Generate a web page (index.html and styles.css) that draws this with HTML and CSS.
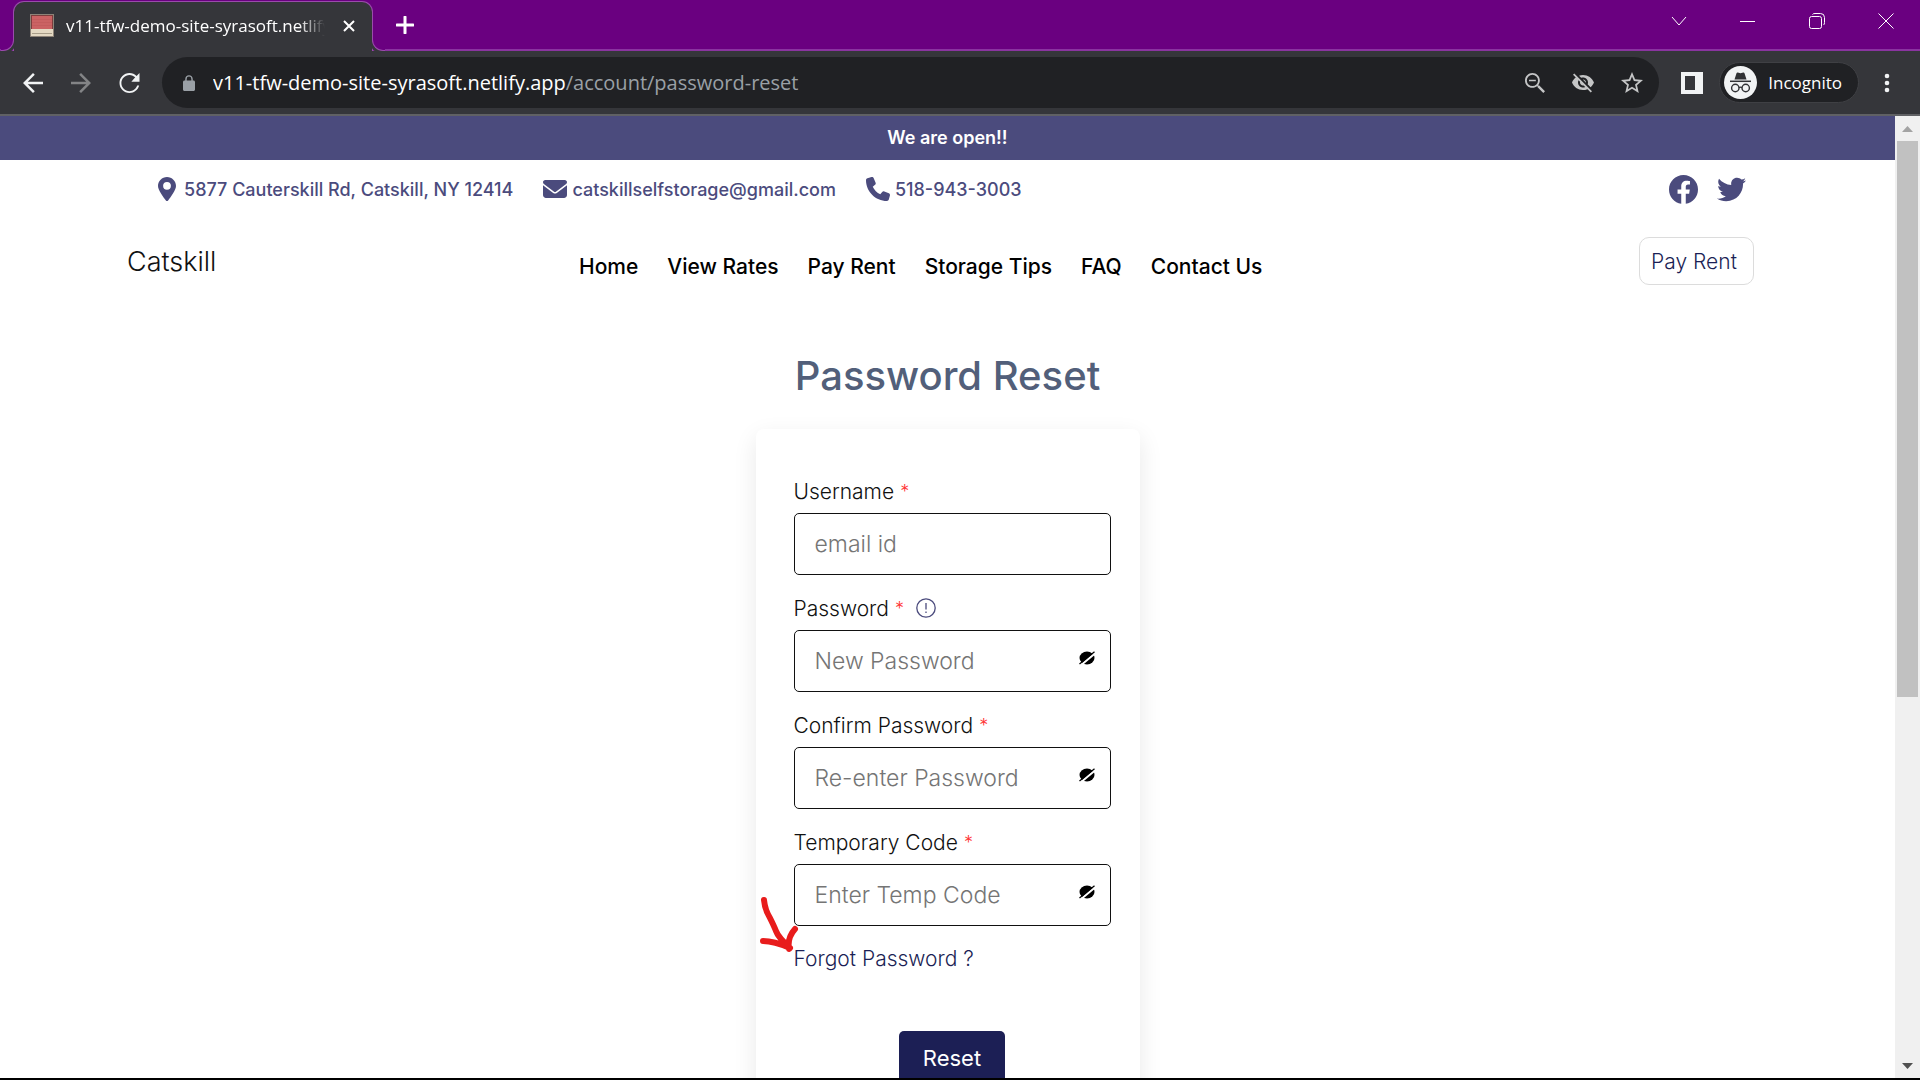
FILE: index.html
```html
<!DOCTYPE html>
<html lang="en">
<head>
<meta charset="utf-8">
<meta name="viewport" content="width=device-width, initial-scale=1">
<title>Password Reset</title>
<link rel="stylesheet" href="styles.css">
</head>
<body>
<div class="window">
  <div class="tabstrip">
    <div class="tab">
      <svg class="tab-favicon" viewBox="0 0 24 23" aria-hidden="true"><rect width="24" height="23" fill="#8d8378"/><rect x="1" y="1" width="22" height="21" fill="#e4d9c3"/><rect x="1" y="1" width="22" height="14" fill="#7d3d3d"/><rect x="2" y="2" width="20" height="13" fill="#cb6263"/><path d="M2 5.500h20M2 8.500h20M2 11.500h20" stroke="#c45c5d"/><path d="M2 19.500h20" stroke="#a89d89"/></svg>
      <span class="tab-title">v11-tfw-demo-site-syrasoft.netlify.app</span>
      <button class="tab-close" aria-label="Close tab"><svg width="12" height="12" viewBox="0 0 12 12"><path d="M1 1l10 10M11 1L1 11" stroke="#fff" stroke-width="2"/></svg></button>
    </div>
    <button class="new-tab" aria-label="New tab"><svg width="18" height="18" viewBox="0 0 18 18"><path d="M9 1v16M1 9h16" stroke="#fff" stroke-width="3" stroke-linecap="round"/></svg></button>
    <div class="window-controls">
      <button aria-label="Search tabs"><svg width="16" height="16" viewBox="0 0 16 16"><path d="M1 4l7 8 7-8"/></svg></button>
      <button aria-label="Minimize"><svg width="16" height="16" viewBox="0 0 16 16"><path d="M0 8.500h15"/></svg></button>
      <button aria-label="Restore"><svg width="16" height="16" viewBox="0 0 16 16"><rect x=".5" y="3.500" width="12" height="12" rx="2"/><path d="M3.500 1.500Q4 .5 6 .5h5.500q4 0 4 4v5q0 2-1 2.500"/></svg></button>
      <button aria-label="Close"><svg width="16" height="16" viewBox="0 0 16 16"><path d="M.5.5l15 15M15.500.5l-15 15"/></svg></button>
    </div>
  </div>

  <div class="toolbar">
    <div class="nav-buttons">
      <button aria-label="Back"><svg width="20" height="20" viewBox="4 4 16 16"><path fill="#f1f3f4" d="M20 11H7.830l5.590-5.590L12 4l-8 8 8 8 1.410-1.410L7.830 13H20v-2z"/></svg></button>
      <button aria-label="Forward"><svg width="20" height="20" viewBox="4 4 16 16"><path fill="#838486" d="M4 11h12.170l-5.590-5.590L12 4l8 8-8 8-1.410-1.410L16.170 13H4v-2z"/></svg></button>
      <button aria-label="Reload"><svg width="21" height="20" viewBox="4 4 16 16"><path fill="#f1f3f4" d="M17.650 6.350C16.200 4.900 14.210 4 12 4c-4.420 0-7.990 3.580-7.990 8s3.570 8 7.990 8c3.730 0 6.840-2.550 7.730-6h-1.600c-.9 2.600-3.200 4.500-6.130 4.500-3.600 0-6.500-2.900-6.500-6.500s2.900-6.500 6.500-6.500c1.800 0 3.400.75 4.570 1.930L13.500 11H20V4l-2.350 2.350z"/></svg></button>
    </div>
    <div class="omnibox">
      <svg class="lock" width="12" height="16" viewBox="4 1 16 21" aria-hidden="true"><path fill="#9aa0a6" fill-rule="evenodd" d="M18 8h-1V6c0-2.760-2.240-5-5-5S7 3.240 7 6v2H6c-1.100 0-2 .9-2 2v10c0 1.100.9 2 2 2h12c1.100 0 2-.9 2-2V10c0-1.100-.9-2-2-2zM15.100 8H8.900V6a3.100 3.100 0 016.200 0z"/></svg>
      <div class="url"><span class="url-host">v11-tfw-demo-site-syrasoft.netlify.app</span>/account/password-reset</div>
      <button aria-label="Zoom"><svg width="20" height="20" viewBox="3 3 17.500 17.500"><path fill="#c4c5c6" d="M15.500 14h-.79l-.28-.27C15.410 12.590 16 11.110 16 9.500 16 5.910 13.090 3 9.500 3S3 5.910 3 9.500 5.910 16 9.500 16c1.610 0 3.090-.59 4.230-1.570l.27.28v.79l5 4.990L20.490 19l-4.990-5zm-6 .4a4.900 4.900 0 110-9.800 4.900 4.900 0 010 9.800zM6.500 8.800h6v1.400h-6z"/></svg></button>
      <button aria-label="Cookies blocked"><svg width="22" height="20" viewBox="1 2.500 22 20"><path fill="#c4c5c6" d="M12 7c2.760 0 5 2.240 5 5 0 .65-.13 1.260-.36 1.830l2.920 2.920c1.510-1.260 2.700-2.890 3.430-4.750-1.730-4.390-6-7.500-11-7.500-1.400 0-2.740.25-3.980.7l2.160 2.160C10.740 7.130 11.350 7 12 7zM2 4.270l2.280 2.280.46.46C3.080 8.300 1.780 10.020 1 12c1.730 4.390 6 7.500 11 7.500 1.550 0 3.030-.3 4.380-.84l.42.42L19.730 22 21 20.730 3.270 3 2 4.270zM7.530 9.800l1.550 1.550c-.05.21-.08.43-.08.65 0 1.660 1.340 3 3 3 .22 0 .44-.03.65-.08l1.550 1.550c-.67.33-1.410.53-2.200.53-2.760 0-5-2.240-5-5 0-.79.2-1.530.53-2.200zm4.310-.78l3.150 3.150.02-.16c0-1.660-1.340-3-3-3l-.17.01z"/></svg></button>
      <button aria-label="Bookmark this tab"><svg width="22" height="21" viewBox="2 2 20 19"><path fill="#c4c5c6" d="M22 9.240l-7.190-.62L12 2 9.190 8.630 2 9.240l5.460 4.730L5.820 21 12 17.270 18.180 21l-1.630-7.030L22 9.240zM12 15.400l-3.760 2.270 1-4.280-3.320-2.880 4.380-.38L12 6.100l1.710 4.040 4.380.38-3.320 2.880 1 4.280L12 15.400z"/></svg></button>
    </div>
    <button class="side-panel" aria-label="Side panel"><svg width="22" height="22" viewBox="0 0 22 22"><path fill="#f1f3f4" fill-rule="evenodd" d="M0 0h22v22H0zM4 4v14h10V4z"/></svg></button>
    <button class="profile">
      <svg width="33" height="33" viewBox="0 0 33 33" aria-hidden="true"><circle cx="16.500" cy="16.500" r="16.500" fill="#f1f3f4"/><path fill="#303134" d="M10.500 13.500l2-6.300q.4-.9 1.300-.7l2.700.7 2.700-.7q.9-.2 1.300.7l2 6.300z"/><path stroke="#303134" stroke-width="1.500" d="M6 15.300h21"/><g fill="none" stroke="#303134" stroke-width="1.400"><circle cx="11.300" cy="22" r="3.700"/><circle cx="21.700" cy="22" r="3.700"/><path d="M15 21.600q1.500-1 3 0"/></g></svg>
      <span>Incognito</span>
    </button>
    <button class="menu" aria-label="Menu"><svg width="6" height="20" viewBox="0 0 6 20"><g fill="#f1f3f4"><circle cx="3" cy="3" r="2.300"/><circle cx="3" cy="10" r="2.300"/><circle cx="3" cy="17" r="2.300"/></g></svg></button>
  </div>

  <div class="viewport">
    <div class="page">
      <div class="banner">We are open!!</div>

      <div class="contact">
        <span class="contact-item contact-address"><svg width="18" height="24" viewBox="0 0 384 512" aria-hidden="true"><path d="M215.700 499.200C267 435 384 279.400 384 192C384 86 298 0 192 0S0 86 0 192c0 87.400 117 243 168.300 307.200c12.300 15.300 35.100 15.300 47.400 0zM192 105a83 83 0 1 1 0 166 83 83 0 1 1 0-166z"/></svg>5877 Cauterskill Rd, Catskill, NY 12414</span>
        <a class="contact-item" href="mailto:catskillselfstorage@gmail.com"><svg width="24" height="24" viewBox="0 0 512 512" aria-hidden="true"><path d="M48 64C21.500 64 0 85.500 0 112c0 15.100 7.100 29.300 19.200 38.400L236.800 313.600c11.400 8.500 27 8.500 38.400 0L492.800 150.400c12.100-9.100 19.200-23.300 19.200-38.400c0-26.500-21.500-48-48-48H48zM0 176V384c0 35.300 28.700 64 64 64H448c35.300 0 64-28.700 64-64V176L294.400 339.200c-22.800 17.100-54 17.100-76.800 0L0 176z"/></svg>catskillselfstorage@gmail.com</a>
        <a class="contact-item" href="tel:518-943-3003"><svg width="24" height="24" viewBox="0 0 512 512" aria-hidden="true"><path d="M164.900 24.600c-7.700-18.600-28-28.500-47.400-23.200l-88 24C12.100 30.200 0 46 0 64C0 311.400 200.600 512 448 512c18 0 33.800-12.100 38.600-29.500l24-88c5.300-19.400-4.600-39.700-23.200-47.400l-96-40c-16.300-6.800-35.200-2.100-46.300 11.600L304.700 368C234.300 334.700 177.300 277.700 144 207.300L193.300 167c13.700-11.200 18.400-30 11.600-46.300l-40-96z"/></svg>518-943-3003</a>
        <div class="social">
          <a href="#facebook" aria-label="Facebook"><svg width="29" height="29" viewBox="8 8 496 496"><path d="M504 256C504 119 393 8 256 8S8 119 8 256c0 123.780 90.690 226.380 209.250 245V327.690h-63V256h63v-54.640c0-62.150 37-96.480 93.670-96.480 27.140 0 55.520 4.840 55.520 4.840v61h-31.280c-30.800 0-40.410 19.120-40.410 38.730V256h68.780l-11 71.690h-57.780V501C413.310 482.380 504 379.780 504 256z"/></svg></a>
          <a href="#twitter" aria-label="Twitter"><svg width="29" height="29" viewBox="0 0 512 512"><path d="M459.370 151.716c.325 4.548.325 9.097.325 13.645 0 138.720-105.583 298.558-298.558 298.558-59.452 0-114.680-17.219-161.137-47.106 8.447.974 16.568 1.299 25.340 1.299 49.055 0 94.213-16.568 130.274-44.832-46.132-.975-84.792-31.188-98.112-72.772 6.498.974 12.995 1.624 19.818 1.624 9.421 0 18.843-1.300 27.614-3.573-48.081-9.747-84.143-51.980-84.143-102.985v-1.299c13.969 7.797 30.214 12.670 47.431 13.319-28.264-18.843-46.781-51.005-46.781-87.391 0-19.492 5.197-37.360 14.294-52.954 51.655 63.675 129.300 105.258 216.365 109.807-1.624-7.797-2.599-15.918-2.599-24.040 0-57.828 46.782-104.934 104.934-104.934 30.213 0 57.502 12.670 76.670 33.137 23.715-4.548 46.456-13.320 66.599-25.340-7.798 24.366-24.366 44.833-46.132 57.827 21.117-2.273 41.584-8.122 60.426-16.243-14.292 20.791-32.161 39.308-52.628 54.253z"/></svg></a>
        </div>
      </div>

      <header class="site-header">
        <a class="brand" href="#home">Catskill</a>
        <nav class="site-nav">
          <a href="#home">Home</a>
          <a href="#rates">View Rates</a>
          <a href="#pay">Pay Rent</a>
          <a href="#tips">Storage Tips</a>
          <a href="#faq">FAQ</a>
          <a href="#contact">Contact Us</a>
        </nav>
        <button class="pay-rent">Pay Rent</button>
      </header>

      <main class="content">
        <h1 class="title">Password Reset</h1>
        <form class="card">
          <div class="field">
            <label for="username">Username <span class="required">*</span></label>
            <div class="control"><input id="username" type="text" placeholder="email id"></div>
          </div>
          <div class="field">
            <label for="password">Password <span class="required">*</span>
              <svg class="info" width="20" height="20" viewBox="0 0 20 20" aria-hidden="true"><circle cx="10" cy="10" r="9.200" fill="none" stroke="#4b4b7d" stroke-width="1.300"/><path d="M10 5v6.500M10 13.500v1.500" stroke="#4b4b7d" stroke-width="1.300"/></svg>
            </label>
            <div class="control"><input id="password" type="password" placeholder="New Password"><button class="reveal" type="button" aria-label="Show password"><svg width="16" height="14" viewBox="0 0 16 14"><ellipse cx="8" cy="7" rx="7.500" ry="6.500"/><path d="M1 15L17 1.500" stroke="#fff" stroke-width="2"/><path d="M-1 12.500L14 0" stroke="#fff" stroke-width="0"/><path d="M.5 13L15.500.8" stroke="#000" stroke-width="1.300"/></svg></button></div>
          </div>
          <div class="field">
            <label for="confirm">Confirm Password <span class="required">*</span></label>
            <div class="control"><input id="confirm" type="password" placeholder="Re-enter Password"><button class="reveal" type="button" aria-label="Show password"><svg width="16" height="14" viewBox="0 0 16 14"><ellipse cx="8" cy="7" rx="7.500" ry="6.500"/><path d="M1 15L17 1.500" stroke="#fff" stroke-width="2"/><path d="M.5 13L15.500.8" stroke="#000" stroke-width="1.300"/></svg></button></div>
          </div>
          <div class="field">
            <label for="code">Temporary Code <span class="required">*</span></label>
            <div class="control"><input id="code" type="password" placeholder="Enter Temp Code"><button class="reveal" type="button" aria-label="Show code"><svg width="16" height="14" viewBox="0 0 16 14"><ellipse cx="8" cy="7" rx="7.500" ry="6.500"/><path d="M1 15L17 1.500" stroke="#fff" stroke-width="2"/><path d="M.5 13L15.500.8" stroke="#000" stroke-width="1.300"/></svg></button></div>
          </div>
          <div class="forgot">
            <a href="#forgot">Forgot Password ?</a>
            <svg class="arrow" width="42" height="60" viewBox="0 0 42 60" aria-hidden="true"><path d="M6 5Q7 15 12 23Q16 31 18 36Q20 42 32 53M5 46Q16 46 32 53M37 34Q29 43 31 54" fill="none" stroke="#e81c1c" stroke-width="6" stroke-linecap="round" stroke-linejoin="round"/></svg>
          </div>
          <button class="submit" type="submit">Reset</button>
        </form>
      </main>
    </div>
    <div class="scrollbar" aria-hidden="true">
      <svg width="25" height="25" viewBox="0 0 25 25"><path d="M12.500 10l5.500 6H7z" fill="#a3a3a3"/></svg>
      <div class="scroll-track"><div class="scroll-thumb"></div></div>
      <svg width="25" height="25" viewBox="0 0 25 25"><path d="M12.500 16l5.500-6H7z" fill="#505050"/></svg>
    </div>
  </div>
</div>
</body>
</html>
```
FILE: styles.css
```css
* { box-sizing: border-box; }

body {
  margin: 0;
  font-family: Inter, "Open Sans", sans-serif;
  color: #111;
}

button {
  margin: 0;
  padding: 0;
  border: 0;
  background: none;
  font: inherit;
  color: inherit;
}

a { color: inherit; text-decoration: none; }

svg { display: block; flex: none; }

.window {
  display: flex;
  flex-direction: column;
  height: 100vh;
  overflow: hidden;
  border-bottom: 2px solid #000;
  background: #35363a;
}

/* Browser tabs */
.tabstrip {
  display: flex;
  height: 51px;
  padding: 1px 0 0 13px;
  background: #6a0080;
  box-shadow: inset 0 -2px #8a34a0;
  font-family: "Open Sans", sans-serif;
}

.tab {
  position: relative;
  display: flex;
  align-items: center;
  gap: 12px;
  flex: 0 1 360px;
  min-width: 0;
  padding: 0 17px 2px 16px;
  border: 1px solid #9a4cab;
  border-bottom: 0;
  border-radius: 11px 11px 0 0;
  background: #35363a;
  color: #fff;
  font-size: 17px;
}

.tab::before,
.tab::after {
  content: "";
  position: absolute;
  bottom: 0;
  width: 12px;
  height: 12px;
  border-bottom: 1px solid #9a4cab;
  background: #6a0080;
}

.tab::before {
  right: 100%;
  border-right: 1px solid #9a4cab;
  border-bottom-right-radius: 11px;
  box-shadow: 2px 2px #35363a;
}

.tab::after {
  left: 100%;
  border-left: 1px solid #9a4cab;
  border-bottom-left-radius: 11px;
  box-shadow: -2px 2px #35363a;
}

.tab-favicon { width: 24px; height: 23px; }

.tab-title {
  flex: 1;
  min-width: 0;
  overflow: hidden;
  white-space: nowrap;
  -webkit-mask-image: linear-gradient(to right, #000 90%, transparent);
  mask-image: linear-gradient(to right, #000 90%, transparent);
}

.tab-close { padding-left: 6px; }

.new-tab { padding: 0 23px 2px; }

.window-controls {
  display: flex;
  height: 40px;
  margin-left: auto;
}

.window-controls button {
  display: grid;
  place-items: center;
  width: 69px;
}

.window-controls svg { fill: none; stroke: #fff; }

/* Browser toolbar */
.toolbar {
  display: flex;
  align-items: center;
  height: 65px;
  padding-right: 30px;
  border-bottom: 2px solid #606164;
  font-family: "Open Sans", sans-serif;
}

.nav-buttons {
  display: flex;
  gap: 28px;
  padding: 0 22px 0 23px;
}

.omnibox {
  display: flex;
  align-items: center;
  gap: 27px;
  flex: 1;
  min-width: 0;
  height: 51px;
  padding: 0 16px 0 21px;
  border-radius: 26px;
  background: #202124;
}

.url {
  flex: 1;
  min-width: 0;
  margin-left: -9px;
  overflow: hidden;
  white-space: nowrap;
  color: #9aa0a6;
  font-size: 20px;
}

.url-host { color: #fff; }

.side-panel { padding: 0 16px 0 22px; }

.profile {
  display: flex;
  align-items: center;
  gap: 11px;
  height: 41px;
  padding: 0 16px 0 4px;
  border: 1px solid #3f4044;
  border-radius: 21px;
  background: #202124;
  color: #fff;
  font-size: 17px;
}

.menu { margin-left: 25px; }

/* Page area */
.viewport {
  display: flex;
  flex: 1;
  min-height: 0;
  background: #fff;
}

.page {
  flex: 1;
  min-width: 0;
  overflow: hidden;
}

.banner {
  height: 44px;
  background: #4b4b7d;
  color: #fff;
  font-size: 18px;
  font-weight: 600;
  line-height: 44px;
  text-align: center;
}

.contact {
  display: flex;
  align-items: center;
  gap: 30px;
  height: 58px;
  padding: 0 149px 0 158px;
  color: #4b4b7d;
  font-size: 18px;
  font-weight: 500;
}

.contact svg { fill: #4b4b7d; }

.contact-item {
  display: flex;
  align-items: center;
  gap: 5px;
}

.contact-address { gap: 8px; }

.social {
  display: flex;
  gap: 19px;
  margin-left: auto;
}

.site-header {
  display: flex;
  align-items: center;
  justify-content: space-between;
  padding: 19px 141px 0 127px;
}

.brand {
  font-size: 27px;
  font-weight: 300;
}

.site-nav {
  display: flex;
  gap: 29px;
  padding: 10px 14px 0 0;
  color: #000;
  font-size: 21px;
  font-weight: 500;
}

.pay-rent {
  width: 115px;
  height: 48px;
  padding-right: 5px;
  border: 1px solid #dcdcdc;
  border-radius: 10px;
  color: #1c1f55;
  font-size: 21px;
  font-weight: 300;
}

.content {
  display: flex;
  flex-direction: column;
  align-items: center;
  padding-top: 66px;
}

.title {
  margin: 0;
  color: #525f7a;
  font-size: 40px;
  font-weight: 500;
  line-height: 50px;
}

.card {
  display: flex;
  flex-direction: column;
  width: 384px;
  margin-top: 28px;
  padding: 49px 29px 60px 38px;
  border-radius: 8px;
  background: #fff;
  box-shadow: 0 8px 24px rgba(0, 0, 0, 0.09);
}

.field { margin-bottom: 20px; }

.field label {
  display: flex;
  align-items: center;
  gap: 6px;
  height: 35px;
  padding-bottom: 9px;
  font-size: 21px;
  font-weight: 300;
}

.required {
  color: #f33;
  font-size: 18px;
}

.info { margin-left: 6px; }

.control {
  display: flex;
  align-items: center;
  height: 62px;
  padding-right: 15px;
  border: 1px solid #111;
  border-radius: 5px;
}

.control input {
  flex: 1;
  min-width: 0;
  height: 100%;
  padding: 0 0 0 20px;
  border: 0;
  outline: 0;
  background: none;
  font: 300 23px Inter, "Open Sans", sans-serif;
}

.control input::placeholder { color: #757575; opacity: 1; }

.reveal { padding-bottom: 6px; }

.forgot {
  position: relative;
  margin-top: -1px;
  color: #1c1f55;
  font-size: 21px;
  font-weight: 300;
  line-height: 28px;
}

/* Hand-drawn pointer over the link */
.arrow {
  position: absolute;
  left: -36px;
  bottom: 18px;
}

.submit {
  align-self: center;
  width: 106px;
  height: 54px;
  margin-top: 58px;
  border-radius: 5px;
  background: #1c1f55;
  color: #fff;
  font-size: 22px;
}

.scrollbar {
  display: flex;
  flex-direction: column;
  width: 25px;
  background: #f0f0f0;
}

.scroll-track {
  flex: 1;
  padding: 0 2px;
}

.scroll-thumb {
  height: 61%;
  background: #c1c1c1;
}
```
